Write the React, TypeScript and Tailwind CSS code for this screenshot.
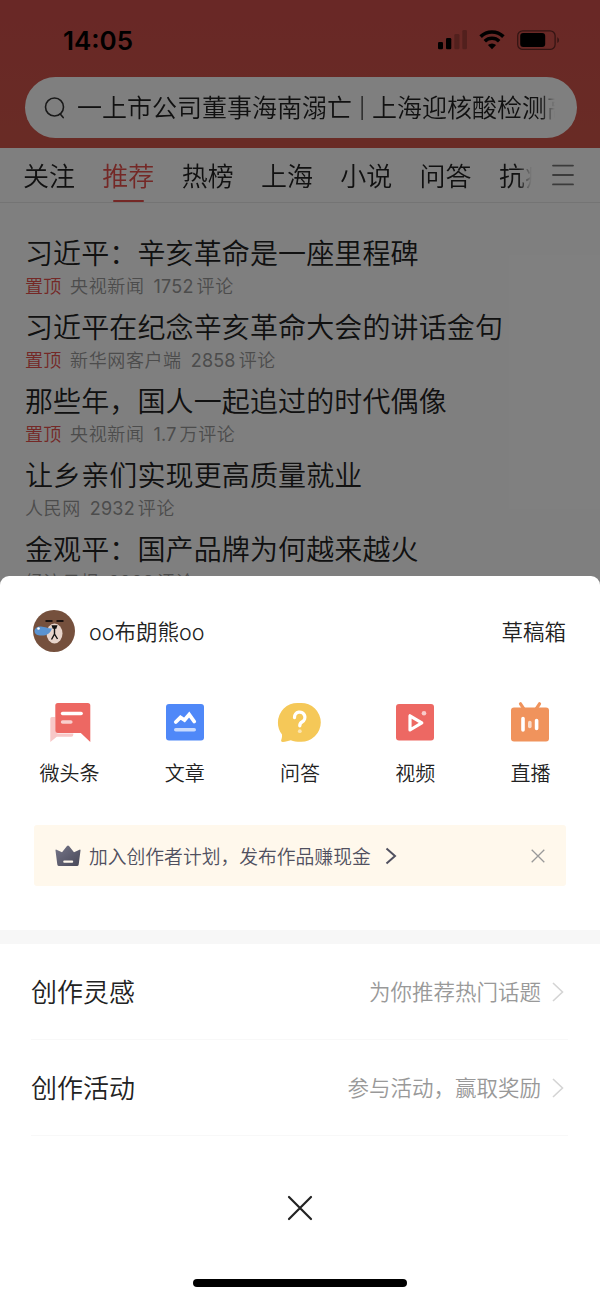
import clsx from "clsx";
import React from "react";

const tabs = ["关注", "推荐", "热榜", "上海", "小说", "问答", "抗疫"];

const articles = [
  { title: "习近平：辛亥革命是一座里程碑", pinned: true, source: "央视新闻", count: "1752" },
  { title: "习近平在纪念辛亥革命大会的讲话金句", pinned: true, source: "新华网客户端", count: "2858" },
  { title: "那些年，国人一起追过的时代偶像", pinned: true, source: "央视新闻", count: "1.7", unit: "万" },
  { title: "让乡亲们实现更高质量就业", pinned: false, source: "人民网", count: "2932" },
  { title: "金观平：国产品牌为何越来越火", pinned: false, source: "经济日报", count: "2008" },
];

const StatusBar = () => (
  <div className="flex h-[77px] items-start justify-between pt-[25px] pr-[40px] pl-[63px]">
    <span className="text-[26px] leading-[31px] font-semibold text-black">14:05</span>
    <div className="flex items-center gap-[12px] pt-[5px]">
      <svg width="30" height="20" viewBox="0 0 30 20">
        <rect x="1" y="12" width="5" height="7.2" rx="1.3" />
        <rect x="9" y="8" width="5.3" height="11.2" rx="1.3" />
        <rect x="17.3" y="4" width="5.2" height="15.2" rx="1.3" opacity="0.22" />
        <rect x="25.3" y="0" width="4.7" height="19.2" rx="1.3" opacity="0.22" />
      </svg>
      <svg width="26" height="20" viewBox="0 0 26 20">
        <path d="M1.6 6.6a16.4 16.4 0 0 1 22.8 0" fill="none" stroke="#000" strokeWidth="3.7" />
        <path d="M5.8 11.2a10.3 10.3 0 0 1 14.4 0" fill="none" stroke="#000" strokeWidth="3.5" />
        <path d="M13 19.3l-4.1-4.2a5.9 5.9 0 0 1 8.2 0z" />
      </svg>
      <svg width="43" height="20" viewBox="0 0 43 20">
        <rect x="0.7" y="0.8" width="37.4" height="18.6" rx="5" fill="none" stroke="#000" strokeWidth="1.3" opacity="0.5" />
        <rect x="3.2" y="3" width="25" height="14" rx="3" />
        <path d="M40.3 7.2c2.2.8 2.2 5 0 5.8z" opacity="0.5" />
      </svg>
    </div>
  </div>
);

const SearchBar = () => (
  <div className="mr-[23px] ml-[25px] flex h-[61px] items-center rounded-full bg-white pr-[22px] pl-[19px]">
    <svg width="22" height="24" viewBox="0 0 22 24" fill="none" stroke="#333" strokeWidth="1.6" strokeLinecap="round">
      <circle cx="10.5" cy="11" r="9" />
      <path d="M16.2 18l3 3.6" />
    </svg>
    <div className="ml-[11px] flex flex-1 items-center overflow-hidden [mask-image:linear-gradient(to_right,black_calc(100%-14px),transparent)] pt-[2px] text-[25px] whitespace-nowrap text-[#222]">
      <span className="shrink-0">一上市公司董事海南溺亡</span>
      <span className="w-[20px] shrink-0 pb-[1px] text-center text-[20px]">|</span>
      <span className="shrink-0">上海迎核酸检测高峰</span>
    </div>
  </div>
);

const TabBar = () => (
  <div className="flex h-[55px] border-b border-[#e8e8e8] pl-[23px]">
    <div className="flex w-[509px] gap-[27.3px] overflow-hidden [mask-image:linear-gradient(to_right,black_calc(100%-14px),transparent)]">
      {tabs.map((tab) => (
        <div
          key={tab}
          className={clsx(
            "flex shrink-0 flex-col items-center text-[26px]",
            tab === "推荐" ? "text-[#e8504c]" : "text-[#222]",
          )}
        >
          <span className="h-[52px] leading-[57px]">{tab}</span>
          {tab === "推荐" && <span className="h-[3px] w-[31px] rounded-full bg-[#e8504c]" />}
        </div>
      ))}
    </div>
    <svg className="mt-[16px] ml-[20px]" width="22" height="24" viewBox="0 0 22 24" stroke="#777" strokeWidth="1.8" strokeLinecap="round">
      <path d="M1 1.6h20M1 11h20M1 20.4h20" />
    </svg>
  </div>
);

const Feed = () => (
  <div className="pt-[33px] pl-[25px]">
    {articles.map((item) => (
      <div key={item.title} className="h-[74px] whitespace-nowrap">
        <p className="text-[28px] leading-[37px] tracking-[0.12px] text-[#222]">{item.title}</p>
        <p className="flex items-baseline text-[18px] leading-[28px] tracking-[0.6px] text-[#999]">
          {item.pinned && <span className="mr-[8.5px] tracking-[0.3px] text-[#e8504c]">置顶</span>}
          <span className="mr-[9px]">{item.source}</span>
          <span className="mr-[3px] text-[18px] font-normal tracking-[0.2px]">{item.count}</span>
          <span>{item.unit}评论</span>
        </p>
      </div>
    ))}
  </div>
);

const Avatar = () => (
  <svg width="42" height="42" viewBox="0 0 42 42">
    <circle cx="21" cy="21" r="21" fill="#75503d" />
    <path d="M12.5 11h7M23.5 11h7" stroke="#1c1210" strokeWidth="1.8" />
    <ellipse cx="21.5" cy="23.5" rx="8" ry="10" fill="#e8d5cc" />
    <path d="M18.5 15.3h6l-1.2 3.5h-3.6z" fill="#111" />
    <path d="M21.5 18v6l-3 5.5M21.5 24l3 5" fill="none" stroke="#111" strokeWidth="1.4" />
    <path d="M1.500 21c0-3 3-4.800 6.500-4.600 4.500.3 7 2.200 11 2-1.500 4.500-5 7.300-10.500 7.200C4.300 25.500 1.500 24 1.500 21z" fill="#5a93d1" />
    <circle cx="5.5" cy="18.5" r="1.3" fill="#fff" />
  </svg>
);

const PostIcon = () => (
  <svg className="-translate-x-[0.7px]" width="44" height="44" viewBox="0 0 44 44">
    <path d="M4.500 17H8v13.500a3 3 0 0 0 3 3h15v1.200a2 2 0 0 1-2 2H9.500L3 42V18.500A1.500 1.500 0 0 1 4.500 17z" fill="#f8c8c8" />
    <path d="M10.500 3h30a2.500 2.500 0 0 1 2.500 2.500v36.500L33.500 33H10.500A2.500 2.500 0 0 1 8 30.500V5.500A2.500 2.500 0 0 1 10.500 3z" fill="#ed6863" />
    <path d="M15.300 13.500h18.500" stroke="#fff" strokeWidth="3.6" strokeLinecap="round" />
    <path d="M15.300 22h8.200" stroke="#f9cfce" strokeWidth="3.6" strokeLinecap="round" />
  </svg>
);

const ArticleIcon = () => (
  <svg width="44" height="44" viewBox="0 0 44 44">
    <rect x="3" y="4" width="38" height="36.5" rx="3" fill="#4f88f8" />
    <path d="M12.800 22l4.700-4.500 4 2.500 4.700-5.500 5 7" fill="none" stroke="#fff" strokeWidth="3.8" strokeLinecap="round" />
    <path d="M12.800 29.700h18.400" stroke="#c8dafd" strokeWidth="3.6" strokeLinecap="round" />
  </svg>
);

const QuestionIcon = () => (
  <svg className="-translate-x-[0.7px]" width="44" height="44" viewBox="0 0 44 44">
    <path d="M20.500 3h3A19.500 19.500 0 0 1 43.500 22.500 19.500 19.500 0 0 1 23.500 41.800c-4.500 0-7-.6-10-1.600-2.500.8-5 1.600-8 1.800-1.700 0-1.900-1-1.500-2.200.6-1.500 1-3.700.600-5.500C1.900 31 .6 27 .6 22.500A19.500 19.500 0 0 1 20.500 3z" fill="#f5c858" />
    <path d="M17.200 17.500a5.200 5.200 0 1 1 7.800 4.300c-1.800 1-2.500 1.800-2.500 4" fill="none" stroke="#fff" strokeWidth="3.3" strokeLinecap="round" />
    <circle cx="22.5" cy="31.2" r="1.9" fill="#fbe6b4" />
  </svg>
);

const VideoIcon = () => (
  <svg width="44" height="44" viewBox="0 0 44 44">
    <rect x="3" y="4" width="38" height="36.5" rx="3" fill="#ed6863" />
    <path d="M17 15.800v14.200l11.800-7.100z" fill="none" stroke="#fff" strokeWidth="3.2" strokeLinejoin="round" />
    <circle cx="31" cy="13.2" r="2.3" fill="#f8cccb" />
  </svg>
);

const LiveIcon = () => (
  <svg width="44" height="44" viewBox="0 0 44 44">
    <path d="M12.500 3.800l4 6M31.500 3.800l-4 6" stroke="#f0935c" strokeWidth="3.2" strokeLinecap="round" />
    <rect x="3" y="7.5" width="38" height="34" rx="3" fill="#f0935c" />
    <path d="M15 18.500v11.500M28.600 20.500v8" stroke="#fff" strokeWidth="3.6" strokeLinecap="round" />
    <path d="M21.800 22.500v4" stroke="#fadcc9" strokeWidth="3.6" strokeLinecap="round" />
  </svg>
);

const actions = [
  { label: "微头条", icon: <PostIcon /> },
  { label: "文章", icon: <ArticleIcon /> },
  { label: "问答", icon: <QuestionIcon /> },
  { label: "视频", icon: <VideoIcon /> },
  { label: "直播", icon: <LiveIcon /> },
];

const links = [
  { title: "创作灵感", hint: "为你推荐热门话题" },
  { title: "创作活动", hint: "参与活动，赢取奖励" },
];

const CreatorBanner = () => (
  <div className="mx-[34px] mt-[38px] flex h-[61px] items-center rounded-[3px] bg-[#fff8ec] pr-[21px] pl-[21px] text-[#50505f]">
    <svg width="26" height="22" viewBox="0 0 26 22">
      <defs>
        <linearGradient id="crown" x1="0" y1="0" x2="1" y2="1">
          <stop offset="0" stopColor="#77778a" />
          <stop offset="1" stopColor="#474757" />
        </linearGradient>
      </defs>
      <path d="M1.500 4.700l5.500 2.500L12 1q1-1.200 2 0l5 6.200 5.500-2.500q1.200-.4 1 .9L23.700 19.500q-.3 1.500-1.700 1.500H4Q2.600 21 2.300 19.500L.5 5.600q-.2-1.300 1-.9z" fill="url(#crown)" />
      <path d="M9.300 16.700h7.800" stroke="#fff8ec" strokeWidth="2.2" strokeLinecap="round" />
    </svg>
    <span className="ml-[8px] pt-[6px] text-[18.8px]">加入创作者计划，发布作品赚现金</span>
    <svg className="ml-[14px]" width="12" height="18" viewBox="0 0 12 18" fill="none" stroke="#50505f" strokeWidth="2">
      <path d="M1.500 1.500l8.500 7.500-8.500 7.500" />
    </svg>
    <svg className="ml-auto" width="14" height="14" viewBox="0 0 14 14" stroke="#999" strokeWidth="1.3">
      <path d="M.7.700l12.600 12.600M13.300.700L.7 13.300" />
    </svg>
  </div>
);

const PublishSheet = () => (
  <div className="absolute inset-x-0 bottom-0 flex h-[723px] flex-col rounded-t-[9px] bg-white text-[#222]">
    <div className="mt-[34px] flex h-[42px] items-center pr-[34px] pl-[33px]">
      <Avatar />
      <span className="ml-[14px] pt-[2px] text-[21.5px]">oo布朗熊oo</span>
      <span className="ml-auto pt-[2px] text-[21.5px]">草稿箱</span>
    </div>
    <div className="mt-[48px] flex px-[12px]">
      {actions.map((action) => (
        <div key={action.label} className="flex flex-1 flex-col items-center">
          {action.icon}
          <span className="mt-[16px] h-[27px] text-[20px] leading-[29px]">{action.label}</span>
        </div>
      ))}
    </div>
    <CreatorBanner />
    <div className="mt-[44px] h-[14px] bg-[#f7f7f7]" />
    <div className="pr-[32px] pl-[31px]">
      {links.map((link) => (
        <div key={link.title} className="flex h-[96px] items-center border-b border-[#f8f8f8]">
          <span className="pt-[2px] text-[26px]">{link.title}</span>
          <span className="ml-auto pt-[2px] text-[21.5px] text-[#999]">{link.hint}</span>
          <svg className="mr-[4px] ml-[11px]" width="12" height="20" viewBox="0 0 12 20" fill="none" stroke="#d4d4d4" strokeWidth="1.6">
            <path d="M1 1l9.500 9L1 19" />
          </svg>
        </div>
      ))}
    </div>
    <svg className="mx-auto mt-[59px]" width="27" height="26" viewBox="0 0 27 26" stroke="#222" strokeWidth="2.2" strokeLinecap="round">
      <path d="M2 2l22 22M24 2L2 24" />
    </svg>
    <div className="mx-auto mt-auto mb-[12px] h-[8px] w-[214px] rounded-full bg-black" />
  </div>
);

const App = () => {
  return (
    <div className="relative h-[1299px] w-[600px] overflow-hidden bg-white font-[350] font-[Inter,'Noto_Sans_CJK_SC',sans-serif]">
      <div className="h-[148px] bg-linear-to-b from-[#d3504c] to-[#d3574b]">
        <StatusBar />
        <SearchBar />
      </div>
      <TabBar />
      <Feed />
      <div className="absolute inset-0 bg-black/50" />
      <PublishSheet />
    </div>
  );
};

export default App;
